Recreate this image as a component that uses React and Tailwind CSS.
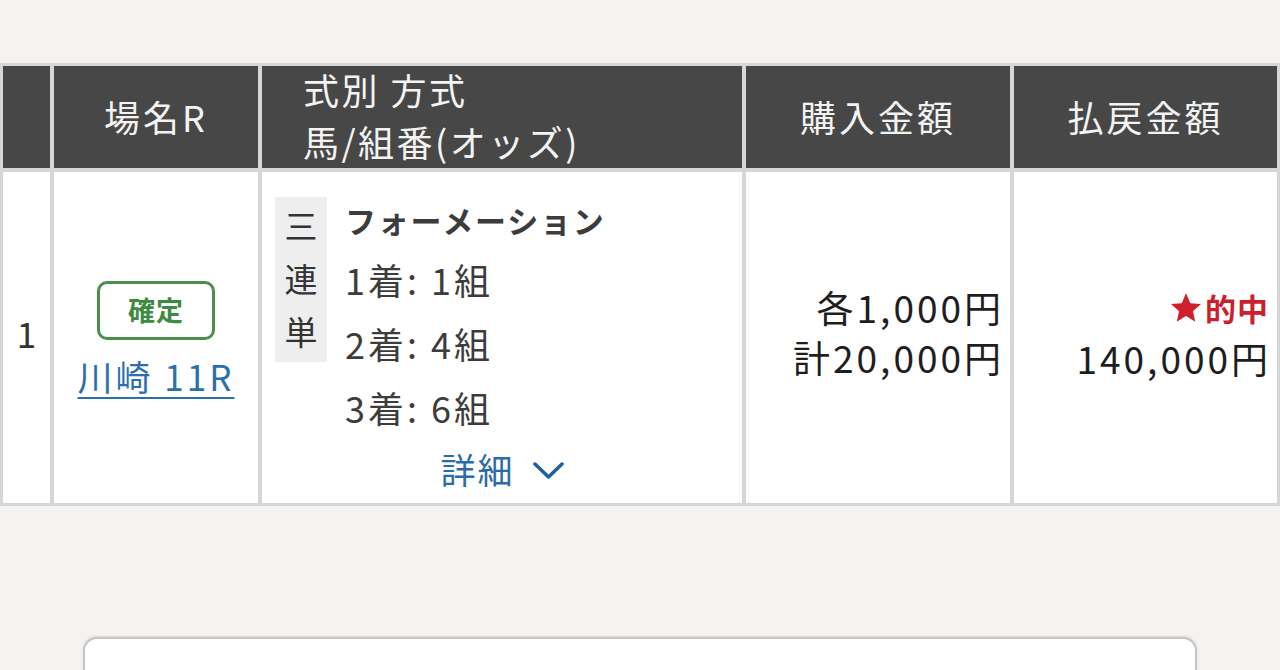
export default function App() {
  const jp = { fontFamily: '"Noto Sans CJK JP", "Noto Sans", sans-serif' };

  return (
    <div className="w-[1280px] h-[670px] overflow-hidden bg-[#f4f3ef] pt-[63px]" style={jp}>
      {/* Bet table */}
      <div className="grid grid-cols-[47px_204px_480px_264px_263px] gap-[4px] bg-[#d6d6d6] p-[3px]">
        {/* Header */}
        <div className="bg-[#474747] h-[102px]"></div>
        <div className="bg-[#474747] h-[102px] flex items-center justify-center pb-[3px] text-[36px] tracking-[3px] text-[#f3f3f3]">
          場名R
        </div>
        <div className="bg-[#474747] h-[102px] flex flex-col justify-center pl-[41px] pb-[4px] text-[36px] leading-[52px] tracking-[2.5px] text-[#f3f3f3]">
          <span>式別 方式</span>
          <span>馬/組番(オッズ)</span>
        </div>
        <div className="bg-[#474747] h-[102px] flex items-center justify-center pb-[3px] text-[36px] tracking-[3px] text-[#f3f3f3]">
          購入金額
        </div>
        <div className="bg-[#474747] h-[102px] flex items-center justify-center pb-[3px] text-[36px] tracking-[3px] text-[#f3f3f3]">
          払戻金額
        </div>

        {/* Row */}
        <div className="bg-white h-[331px] flex items-center justify-center pb-[8px] text-[35px] text-[#333]">
          1
        </div>
        <div className="bg-white h-[331px] flex flex-col items-center justify-center pt-[2px]">
          <span className="w-[118px] h-[59px] flex items-center justify-center border-[3px] border-[#4a8f4c] rounded-[10px] text-[27px] tracking-[1px] font-bold text-[#3d8b40]">
            確定
          </span>
          <a className="mt-[16px] text-[35px] leading-[40px] tracking-[3px] text-[#2c6fae] underline underline-offset-[6px] decoration-[2px]">
            川崎 11R
          </a>
        </div>
        <div className="bg-white h-[331px] flex flex-col pt-[24px]">
          <div className="flex pl-[13px]">
            <div className="w-[52px] h-[165px] mt-[1px] bg-[#eeeeee] flex flex-col items-center py-[2px] text-[33px] leading-[53px] text-[#333]">
              <span>三</span>
              <span>連</span>
              <span>単</span>
            </div>
            <div className="ml-[18px] flex flex-col text-[#3c3c3c]">
              <span className="text-[31px] leading-[48px] font-bold tracking-[1.8px]">フォーメーション</span>
              <span className="text-[36px] leading-[64px] tracking-[3px] pt-[3px]">1着: 1組</span>
              <span className="text-[36px] leading-[64px] tracking-[3px]">2着: 4組</span>
              <span className="text-[36px] leading-[64px] tracking-[3px]">3着: 6組</span>
            </div>
          </div>
          <div className="flex items-center justify-center h-[60px] -mt-[166px] translate-y-[166px] text-[35px] tracking-[2px] text-[#2a6ca8]">
            <span>詳細</span>
            <svg className="ml-[18px] mt-[4px]" width="31" height="18" viewBox="0 0 31 18" fill="none">
              <path d="M2 2 L15.5 15 L29 2" stroke="#1f5f9e" strokeWidth="3.5" strokeLinecap="round" strokeLinejoin="round" />
            </svg>
          </div>
        </div>
        <div className="bg-white h-[331px] flex flex-col items-end justify-center pr-[9px] pb-[12px] text-[37px] leading-[50px] tracking-[3px] text-[#1e1e1e]">
          <span className="-mr-[3px]">各1,000円</span>
          <span className="-mr-[3px]">計20,000円</span>
        </div>
        <div className="bg-white h-[331px] flex flex-col items-end justify-center pr-[9px] pb-[10px] text-[#1e1e1e]">
          <span className="flex items-center text-[31px] leading-[50px] font-bold tracking-[1px] text-[#cc1f2d]">
            <svg width="38" height="36" viewBox="0 0 24 24">
              <path d="M12 2.2l2.9 6.6 7.1.6-5.4 4.7 1.6 7-6.2-3.7-6.2 3.7 1.6-7L2 9.4l7.1-.6z" fill="#d0202e" />
            </svg>
            <span className="-mr-[1px]">的中</span>
          </span>
          <span className="text-[37px] leading-[50px] tracking-[3px] -mr-[3px]">140,000円</span>
        </div>
      </div>

      {/* Next card */}
      <div className="mt-[131px] ml-[83px] w-[1114px] h-[60px] bg-white border-2 border-[#c6c6c6] rounded-[14px] shadow-[0_-1px_2px_rgba(0,0,0,0.12)]"></div>
    </div>
  );
}
